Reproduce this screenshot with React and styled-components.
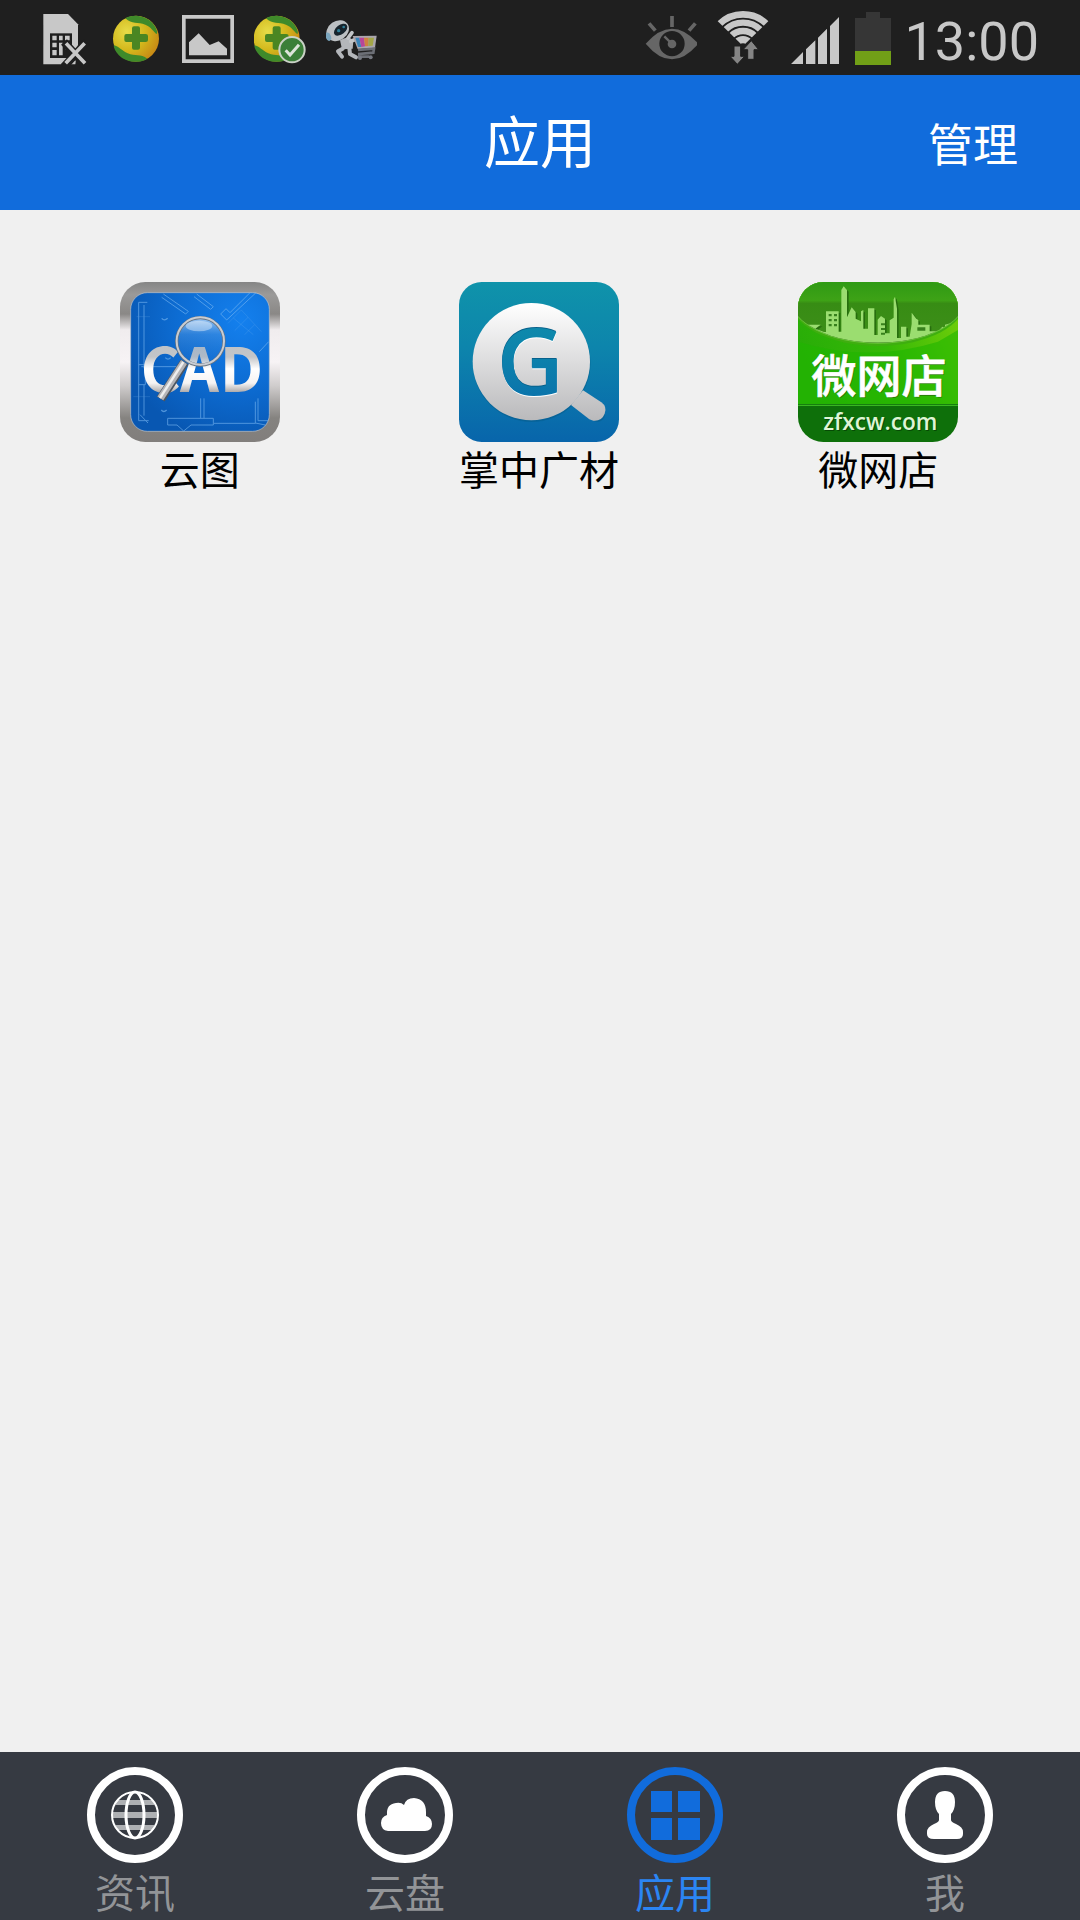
import React, { useState } from "react";
import styled, { createGlobalStyle } from "styled-components";

const GlobalStyle = createGlobalStyle`
    body {
        margin: 0;
        background-color: #f0f0f0;
        font-family: Roboto, "Noto Sans CJK SC", sans-serif;
    }
    button {
        border: none;
        background: none;
        padding: 0;
        font-family: inherit;
    }
`;

const Screen = styled.div`
    display: flex;
    flex-direction: column;
    min-height: 100vh;
`;

const StatusBar = styled.div`
    display: flex;
    justify-content: space-between;
    height: 75px;
    padding: 0 41px 0 38px;
    background-color: #1f1f1f;
`;

const StatusGroup = styled.div`
    display: flex;
    gap: ${props => props.$gap}px;
`;

const StatusIcon = styled.svg`
    display: block;
    width: ${props => props.$width || 52}px;
    height: 75px;
`;

const Clock = styled.time`
    color: #c8c8c8;
    font-size: 54px;
    line-height: 83px;
`;

const Header = styled.header`
    display: grid;
    grid-template-columns: 1fr auto 1fr;
    align-items: center;
    box-sizing: border-box;
    height: 135px;
    padding: 2px 62px 0;
    background-color: #116cdc;
    color: white;
`;

const Title = styled.h1`
    grid-column: 2;
    margin: 0;
    font-size: 56px;
    font-weight: 400;
    line-height: 64px;
`;

const ManageButton = styled.button`
    justify-self: end;
    padding-top: 6px;
    color: white;
    font-size: 45px;
    line-height: 64px;
`;

const AppGrid = styled.main`
    flex: 1;
    display: grid;
    grid-template-columns: repeat(3, 1fr);
    align-content: start;
    padding: 72px 32px 72px 30px;
`;

const AppLink = styled.a`
    display: flex;
    flex-direction: column;
    align-items: center;
    gap: 6px;
    color: black;
    font-size: 40px;
    line-height: 48px;
    text-decoration: none;
`;

const AppIcon = styled.svg`
    display: block;
    width: 160px;
    height: 160px;
`;

const TabBar = styled.nav`
    display: flex;
    height: 168px;
    background-color: #363a42;
`;

const Tab = styled.button`
    flex: 1;
    display: flex;
    flex-direction: column;
    align-items: center;
    gap: 8px;
    padding-top: 15px;
    color: ${props => (props.$active ? "#2b85f3" : "#929497")};
    font-size: 40px;
    line-height: 48px;
`;

const TabIcon = styled.svg`
    display: block;
    width: 96px;
    height: 96px;
    color: ${props => (props.$active ? "#116cdc" : "white")};
`;

const SimIcon = () => (
    <StatusIcon viewBox="54 0 156 225">
        <path d="M70 42h74l30 31v60l-8 60H70z" fill="#c8c8c8" />
        <path d="M90 100h66v74H90z" fill="#1f1f1f" />
        <path d="M97 107h13v14H97zm20 0h11v14h-11zm18 0h14v14h-14zM97 128h13v14H97zm0 22h13v16H97zm20-22h11v38h-11zm18 0h14v20h-14z" fill="#c8c8c8" />
        <path d="M132 126l69 75M200 126l-69 75" stroke="#1f1f1f" strokeWidth="24" />
        <path d="M138 130l57 60M194 130l-57 60" stroke="#c8c8c8" strokeWidth="11" />
    </StatusIcon>
);

const ShieldBall = ({ id }) => (
    <>
        <defs>
            <radialGradient id={id} cx="0.3" cy="0.35" r="0.8">
                <stop offset="0" stopColor="#e6dc48" />
                <stop offset="0.5" stopColor="#d3b81c" />
                <stop offset="1" stopColor="#c68214" />
            </radialGradient>
        </defs>
        <circle cx="348" cy="116" r="69" fill={`url(#${id})`} />
        <path d="M316 55c30-16 70-5 88 23 8 13 9 22 6 24-9-6-17-22-34-28-22-8-40-1-60-19z" fill="#3f8a2a" />
        <path d="M281 136c16 2 24 17 42 24 22 9 39 1 59 16-28 17-66 10-86-11-9-9-15-20-15-29z" fill="#3f8a2a" />
        <path d="M336 85q0-6 6-6h12q6 0 6 6v17h17q7 0 7 6v12q0 6-7 6h-17v17q0 6-6 6h-12q-6 0-6-6v-17h-17q-6 0-6-6v-12q0-6 6-6h17z" fill="#4a8622" />
    </>
);

const ShieldIcon = () => (
    <StatusIcon viewBox="270 0 156 225">
        <ShieldBall id="ball" />
    </StatusIcon>
);

const ShieldCheckIcon = () => (
    <StatusIcon viewBox="702 0 156 225">
        <g transform="translate(422 0)">
            <ShieldBall id="ballCheck" />
        </g>
        <circle cx="816" cy="149" r="38" fill="#3b7f38" stroke="#c9d1c6" strokeWidth="6" />
        <path d="M797 151l13 14 27-31" fill="none" stroke="#dde4da" strokeWidth="9" />
    </StatusIcon>
);

const GalleryIcon = () => (
    <StatusIcon viewBox="486 0 156 225">
        <path d="M486 45h156v144H486zm11 11v122h134V56z" fill="#c8c8c8" fillRule="evenodd" />
        <path d="M507 166v-39l29-27 33 35 27-11 25 22v20z" fill="#c8c8c8" />
    </StatusIcon>
);

const RobotIcon = () => (
    <StatusIcon viewBox="918 0 156 225">
        <path d="M960 120l26-10 14 12-2 24-32 2z" fill="#b4b7bb" />
        <path d="M984 114l12-16M992 124l16-6" stroke="#c2c5c8" strokeWidth="11" strokeLinecap="round" />
        <path d="M968 146l-14 8 12 16M988 144l2 18 18 10" fill="none" stroke="#b4b7bb" strokeWidth="12" strokeLinecap="round" strokeLinejoin="round" />
        <ellipse cx="953" cy="92" rx="36" ry="29" transform="rotate(-35 953 92)" fill="#bcc0c3" />
        <ellipse cx="962" cy="89" rx="23" ry="14" transform="rotate(-38 962 89)" fill="#17242c" />
        <circle cx="956" cy="92" r="5" fill="#2f7f98" />
        <circle cx="971" cy="81" r="4" fill="#2f7f98" />
        <ellipse cx="925" cy="110" rx="8" ry="13" transform="rotate(-20 925 110)" fill="#7ba6be" />
        <path d="M998 108l72-1-5 36-52 4z" fill="#aaa6ad" />
        <path d="M1006 113h12l6 28h-10z" fill="#3a85b8" />
        <path d="M1018 113h14l3 26-11 2z" fill="#b8459a" />
        <path d="M1032 113h14l-1 25-10 1z" fill="#cf8040" />
        <path d="M1046 113h16l-4 24-13 1z" fill="#a3a648" />
        <path d="M1014 150l48-4-2 12-42 4v8h30" fill="none" stroke="#6c6f76" strokeWidth="8" />
        <circle cx="1020" cy="174" r="6" fill="#777a82" />
        <circle cx="1052" cy="172" r="6" fill="#777a82" />
    </StatusIcon>
);

const EyeIcon = () => (
    <StatusIcon viewBox="75 0 156 225">
        <path d="M77 131q79-90 158 0q-79 94-158 0z" fill="#666" />
        <circle cx="156" cy="131" r="38" fill="#1f1f1f" />
        <circle cx="156" cy="132" r="13" fill="#666" />
        <path d="M155 131l-22-22" stroke="#666" strokeWidth="7" />
        <path d="M156 48v33M87 70l19 22M226 70l-19 22" stroke="#666" strokeWidth="11" />
    </StatusIcon>
);

const WifiIcon = () => (
    <StatusIcon viewBox="291 0 156 225">
        <defs>
            <clipPath id="wifiCone"><path d="M369 138L285 56V20h168v36z" /></clipPath>
        </defs>
        <g fill="none" stroke="#c8c8c8" clipPath="url(#wifiCone)">
            <circle cx="369" cy="144" r="101" strokeWidth="20" />
            <circle cx="369" cy="144" r="76" strokeWidth="19" />
            <circle cx="369" cy="144" r="51" strokeWidth="19" />
            <circle cx="369" cy="144" r="25" strokeWidth="22" />
        </g>
        <path d="M342 138h20v31h12l-22 24-22-24h12zM383 178v-29h-14l25-27 22 27h-14v29z" fill="#858585" stroke="#1f1f1f" strokeWidth="3" />
    </StatusIcon>
);

const SignalIcon = () => (
    <StatusIcon viewBox="507 0 156 225">
        <path d="M513 192l36-36v36zM558 192v-44l28-27v71zM594 192v-79l27-27v106zM630 192V78l27-27v141z" fill="#c8c8c8" />
    </StatusIcon>
);

const BatteryIcon = () => (
    <StatusIcon $width={36} viewBox="705 0 108 225">
        <path d="M705 54h33V36h42v18h33v99H705z" fill="#363636" />
        <path d="M705 153h108v42H705z" fill="#719f17" />
    </StatusIcon>
);

const CadIcon = () => (
    <AppIcon viewBox="60 36 480 480">
        <defs>
            <linearGradient id="cadFrame" x2="0" y2="1">
                <stop offset="0" stopColor="#858585" />
                <stop offset="0.08" stopColor="#9b9a99" />
                <stop offset="0.2" stopColor="#8a8886" />
                <stop offset="0.3" stopColor="#f0ecee" />
                <stop offset="0.5" stopColor="#f7f3f5" />
                <stop offset="0.65" stopColor="#cfcccc" />
                <stop offset="0.85" stopColor="#858380" />
                <stop offset="1" stopColor="#817e7c" />
            </linearGradient>
            <radialGradient id="cadBoard" cx="0.8" cy="0.2" r="0.9">
                <stop offset="0" stopColor="#1480ee" />
                <stop offset="0.5" stopColor="#0d6dd4" />
                <stop offset="1" stopColor="#0857b2" />
            </radialGradient>
            <linearGradient id="cadLetter" gradientUnits="userSpaceOnUse" x1="0" y1="225" x2="0" y2="368">
                <stop offset="0" stopColor="#bfc3c7" />
                <stop offset="0.25" stopColor="#c3c5c8" />
                <stop offset="0.5" stopColor="#fff" />
                <stop offset="0.8" stopColor="#f5f3f3" />
                <stop offset="1" stopColor="#a9a6a6" />
            </linearGradient>
            <linearGradient id="cadLens" x2="0" y2="1">
                <stop offset="0" stopColor="#fff" stopOpacity="0.6" />
                <stop offset="0.35" stopColor="#6fa5de" stopOpacity="0.3" />
                <stop offset="1" stopColor="#2a68b0" stopOpacity="0.1" />
            </linearGradient>
        </defs>
        <rect x="60" y="36" width="480" height="480" rx="76" fill="url(#cadFrame)" />
        <rect x="92" y="68" width="416" height="416" rx="50" fill="url(#cadBoard)" stroke="#b9c3cf" strokeWidth="2" />
        <g fill="none" stroke="#7dbaf3" strokeWidth="3" opacity="0.6">
            <path d="M142 97h-26v355h30M132 105v190M116 284h20v60h-20M124 290h130M132 345v92M190 72l75 52-8 8-72-50M290 72l50 38-8 8-50-38" />
            <path d="M450 68l-60 60-12-12-16 16 18 18 88-82M478 245l28-30M302 385v60M312 385v60" />
            <path d="M203 445h137v20h-67l-22 18-20-18h-28zM342 460h125M474 385v67h30M466 395v64l30 6M120 434l24 25" />
            <path d="M424 120l60 65M400 144l60 50M424 120l-40 40M444 142l-40 40M464 164l-30 30M110 140h40M100 380h50" strokeWidth="1" />
            <path d="M185 145q8 9 18 0M196 263q8 9 16 0M184 420q7 9 16 0" strokeWidth="4" />
        </g>
        <g fontFamily="'Noto Sans CJK SC', sans-serif" fontWeight="700" fontSize="182" fill="url(#cadLetter)" textAnchor="middle">
            <text x="182" y="366">C</text>
            <text x="298" y="366">A</text>
            <text x="424" y="366">D</text>
        </g>
        <circle cx="301" cy="214" r="68" fill="url(#cadLens)" />
        <path d="M254 276l-72 111" stroke="#4c5561" strokeWidth="28" />
        <path d="M252 276l-71 109" stroke="#b3b3b6" strokeWidth="21" />
        <path d="M250 276l-70 108" stroke="#eee" strokeWidth="7" />
        <circle cx="301" cy="214" r="71" fill="none" stroke="#68737f" strokeWidth="10" />
        <circle cx="301" cy="213" r="71" fill="none" stroke="#c9cdd3" strokeWidth="6" />
        <ellipse cx="297" cy="168" rx="40" ry="16" fill="#fff" opacity="0.4" />
    </AppIcon>
);

const SearchGIcon = () => (
    <AppIcon viewBox="57 36 480 480">
        <defs>
            <linearGradient id="gBack" gradientUnits="userSpaceOnUse" x1="0" y1="36" x2="0" y2="516">
                <stop offset="0" stopColor="#0f93aa" />
                <stop offset="0.4" stopColor="#0d85ac" />
                <stop offset="1" stopColor="#0865ab" />
            </linearGradient>
            <linearGradient id="gGlass" gradientUnits="userSpaceOnUse" x1="0" y1="100" x2="0" y2="455">
                <stop offset="0" stopColor="#fff" />
                <stop offset="1" stopColor="#b9b9bb" />
            </linearGradient>
        </defs>
        <rect x="57" y="36" width="480" height="480" rx="68" fill="url(#gBack)" />
        <g fill="#075a86" stroke="#075a86" opacity="0.5">
            <circle cx="275" cy="279" r="176" />
            <path d="M398 370l74 62" strokeWidth="46" strokeLinecap="round" />
        </g>
        <circle cx="274" cy="275" r="176" fill="url(#gGlass)" />
        <path d="M429 361l55 36q18 13 10 34-9 23-34 21l-12-4-55-43z" fill="url(#gGlass)" />
        <g fontFamily="'Open Sans', sans-serif" fontWeight="600" fontSize="278" textAnchor="middle">
            <text x="272" y="379" fill="#fff">G</text>
            <text x="270" y="373" fill="#07618c">G</text>
            <text x="271" y="376" fill="url(#gBack)">G</text>
        </g>
    </AppIcon>
);

const skyline = "M77 164h45l-16 12 26 10h6v-62h38v61h8V60l7-11 10 11v82l14-30 12 14v20l16 8v-30l7-4v56h14v-61h19v80h10v-46l10-11 12 8v44h14v-39l12-8V88l4-8 6 36v88h12v-34h16v30h10l6-38v-34l14 18 6 4v14h34v20h26l12-14 8 4v-10l22-6v60H77z";

const ShopIcon = () => (
    <AppIcon viewBox="54 36 480 480">
        <defs>
            <clipPath id="shopShape"><rect x="54" y="36" width="480" height="480" rx="76" /></clipPath>
            <clipPath id="shopSky"><ellipse cx="294" cy="84" rx="262" ry="134" /></clipPath>
            <linearGradient id="shopBody" x1="0" y1="0.5" x2="1" y2="0.2">
                <stop offset="0" stopColor="#29ad08" />
                <stop offset="0.5" stopColor="#35b906" />
                <stop offset="1" stopColor="#71ce0a" />
            </linearGradient>
            <linearGradient id="shopTop" gradientUnits="userSpaceOnUse" x1="0" y1="36" x2="0" y2="220">
                <stop offset="0" stopColor="#2f9a14" />
                <stop offset="0.3" stopColor="#3ea216" />
                <stop offset="0.35" stopColor="#378c14" />
                <stop offset="1" stopColor="#3f8f1a" />
            </linearGradient>
        </defs>
        <g clipPath="url(#shopShape)">
            <path d="M54 36h480v370H54z" fill="url(#shopBody)" />
            <path d="M54 215q210 65 420 0l60-35v226H54z" fill="#20b500" opacity="0.6" />
            <ellipse cx="294" cy="86" rx="266" ry="142" fill="#3fae10" />
            <ellipse cx="294" cy="84" rx="264" ry="137" fill="#6cc43c" />
            <ellipse cx="294" cy="84" rx="262" ry="134" fill="url(#shopTop)" />
            <g clipPath="url(#shopSky)">
                <path d={skyline} fill="#276e0e" transform="translate(5 5)" />
                <path d={skyline} fill="#9bdd70" />
                <path d="M146 132h9v7h-9zm16 0h9v7h-9zm-16 15h9v7h-9zm16 0h9v7h-9zm-16 15h9v7h-9zm16 0h9v7h-9zM303 160h12v6h-12zm0 14h12v6h-12zm0 14h12v6h-12zM412 172h24v10h-24z" fill="#38801d" />
            </g>
            <path d="M54 402h480v114H54z" fill="#0e700a" />
            <path d="M54 406h480" stroke="#41c427" strokeWidth="3" />
            <g fontFamily="'Noto Sans CJK SC', sans-serif" fontWeight="500" fontSize="135" textAnchor="middle">
                <text x="300" y="373" fill="#277909">微网店</text>
                <text x="297" y="369" fill="white" stroke="white" strokeWidth="2">微网店</text>
            </g>
            <g fontFamily="'Open Sans', sans-serif" fontWeight="600" fontSize="68" textAnchor="middle">
                <text x="304" y="484" fill="#064a05">zfxcw.com</text>
                <text x="301" y="481" fill="#dff5d5">zfxcw.com</text>
            </g>
        </g>
    </AppIcon>
);

/* glyphs drawn inside the ring of a tab */
const newsGlyph = (
    <g fill="none" stroke="currentColor" strokeWidth="2">
        <path d="M25 45h46v6H25zM29 33h38v5H29zM29 58h38v5H29z" fill="currentColor" stroke="none" opacity="0.6" />
        <circle cx="48" cy="48" r="23" />
        <ellipse cx="48" cy="48" rx="9" ry="23" strokeWidth="3" />
    </g>
);

const cloudGlyph = (
    <path d="M31 64q-7-1-7-8 0-6 6-8-1-11 9-12 5-1 8 2 2-7 10-7 12 1 12 14v4q6 2 6 8 0 7-7 7z" fill="currentColor" />
);

const gridGlyph = (
    <path d="M24 24h21v21H24zm27 0h22v21H51zM24 51h21v22H24zm27 0h22v22H51z" fill="currentColor" />
);

const personGlyph = (
    <path d="M48 24q-10 0-10 11 0 8 4 12v6q0 2-5 4-7 3-7 8v2q0 5 7 5h23q6 0 6-5v-2q0-5-7-8-5-2-5-4v-6q4-4 4-12 0-11-10-11z" fill="currentColor" />
);

const apps = [
    { name: "云图", Icon: CadIcon },
    { name: "掌中广材", Icon: SearchGIcon },
    { name: "微网店", Icon: ShopIcon }
];

const tabs = [
    { name: "资讯", glyph: newsGlyph },
    { name: "云盘", glyph: cloudGlyph },
    { name: "应用", glyph: gridGlyph },
    { name: "我", glyph: personGlyph }
];

const App = () => {

    const [current, setCurrent] = useState("应用");

    return (
        <Screen>
            <GlobalStyle />
            <StatusBar>
                <StatusGroup $gap={20}>
                    <SimIcon />
                    <ShieldIcon />
                    <GalleryIcon />
                    <ShieldCheckIcon />
                    <RobotIcon />
                </StatusGroup>
                <StatusGroup $gap={14}>
                    <StatusGroup $gap={20}>
                        <EyeIcon />
                        <WifiIcon />
                        <SignalIcon />
                    </StatusGroup>
                    <BatteryIcon />
                    <Clock>13:00</Clock>
                </StatusGroup>
            </StatusBar>
            <Header>
                <Title>应用</Title>
                <ManageButton type="button">管理</ManageButton>
            </Header>
            <AppGrid>
                {apps.map(({ name, Icon }) => (
                    <AppLink key={name} href="#">
                        <Icon />
                        {name}
                    </AppLink>
                ))}
            </AppGrid>
            <TabBar>
                {tabs.map(({ name, glyph }) => (
                    <Tab key={name} type="button" $active={name === current} onClick={() => setCurrent(name)}>
                        <TabIcon $active={name === current} viewBox="0 0 96 96">
                            <circle cx="48" cy="48" r="44" fill="none" stroke="currentColor" strokeWidth="8" />
                            {glyph}
                        </TabIcon>
                        {name}
                    </Tab>
                ))}
            </TabBar>
        </Screen>
    );
}

export default App;
